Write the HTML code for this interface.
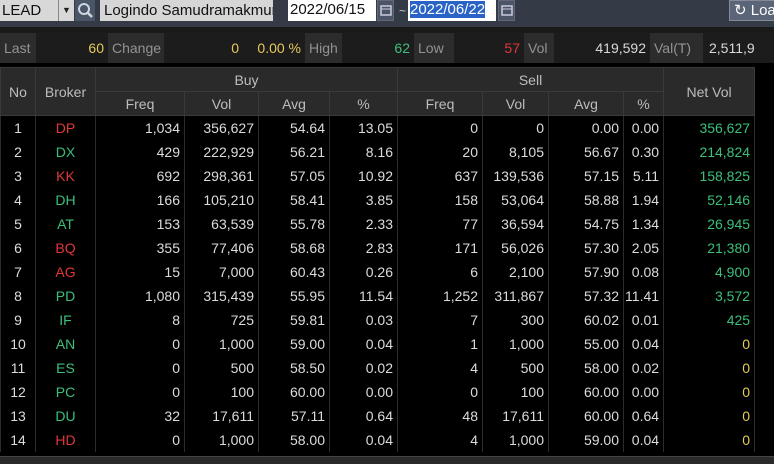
<!DOCTYPE html>
<html><head><meta charset="utf-8"><style>
*{margin:0;padding:0;box-sizing:border-box}
body{width:774px;height:464px;background:#000;overflow:hidden;font-family:"Liberation Sans",Arial,sans-serif;font-size:13px;color:#d8d8d8;position:relative}
.top{position:absolute;left:0;top:0;width:774px;height:27px;background:#353b46}
.ab{position:absolute}
.strip{position:absolute;left:0;top:27px;width:774px;height:6px;background:#1a1a1a}
.info{position:absolute;top:33px;height:30px;line-height:30px;font-size:14px;white-space:nowrap;overflow:hidden}
.lb{background:#2c2c2c;color:#939393;padding-left:4px}
.vl{background:#1c1c1c;text-align:right;padding-right:4px}
table{position:absolute;left:0;top:67px;border-collapse:collapse;table-layout:fixed;width:754px}
th{background:#2a2a2a;color:#bdbdbd;font-weight:normal;font-size:14px;border:1px solid #3a3a3a;height:24px}
td{height:24px;border-left:1px solid #2c2c2c;border-right:1px solid #2c2c2c;text-align:right;padding-right:4px;font-size:14px;color:#dcdcdc}
td.c{text-align:center;padding:0}
.g{color:#3dbf7c}.r{color:#e03838}.y{color:#e6c85a}
.bot{position:absolute;left:0;top:456px;width:774px;height:8px;background:#2a2a2a;border-top:1px solid #444}
</style></head><body>
<div class="top"></div>
<div class="ab" style="left:0;top:0;width:58px;height:21px;background:#d8d8d8;color:#111;font-size:15px;line-height:21px;padding-left:2px">LEAD</div>
<div class="ab" style="left:58px;top:0;width:16px;height:21px;background:#d8d8d8;border-left:1px solid #888;color:#222;font-size:9px;line-height:21px;text-align:center">▼</div>
<div class="ab" style="left:75px;top:0;width:20px;height:21px;background:#4a5568"><svg width="20" height="21"><circle cx="9" cy="9" r="5" fill="none" stroke="#cfd6e0" stroke-width="2"/><line x1="12.5" y1="12.5" x2="17" y2="17" stroke="#cfd6e0" stroke-width="2.5"/></svg></div>
<div class="ab" style="left:100px;top:0;width:173px;height:21px;background:#d6d6d6;color:#111;font-size:15px;line-height:21px;padding-left:4px;overflow:hidden;white-space:nowrap">Logindo Samudramakmur</div>
<div class="ab" style="left:288px;top:0;width:88px;height:21px;background:#fff;color:#111;font-size:15px;line-height:19px;padding-left:2px">2022/06/15</div>
<div class="ab" style="left:377px;top:0;width:17px;height:21px;background:#4a5568;border:1px solid #667"><svg width="15" height="19"><rect x="3" y="5" width="10" height="9" fill="none" stroke="#ccd" stroke-width="1.5"/><line x1="3" y1="8" x2="13" y2="8" stroke="#ccd"/></svg></div>
<div class="ab" style="left:399px;top:4px;color:#ccc;font-size:12px">~</div>
<div class="ab" style="left:408px;top:0;width:88px;height:21px;background:#fff;font-size:15px;line-height:19px;padding-left:2px"><span style="background:#2a63c8;color:#fff">2022/06/22</span></div>
<div class="ab" style="left:498px;top:0;width:17px;height:21px;background:#4a5568;border:1px solid #667"><svg width="15" height="19"><rect x="3" y="5" width="10" height="9" fill="none" stroke="#ccd" stroke-width="1.5"/><line x1="3" y1="8" x2="13" y2="8" stroke="#ccd"/></svg></div>
<div class="ab" style="left:729px;top:0;width:50px;height:21px;background:#5a6577;border:1px solid #889;color:#fff;font-size:15px;line-height:20px;padding-left:4px;white-space:nowrap;overflow:hidden">↻ Load</div>
<div class="strip"></div>
<div class="info lb" style="left:0;width:36px">Last</div>
<div class="info vl y" style="left:36px;width:72px">60</div>
<div class="info lb" style="left:108px;width:56px">Change</div>
<div class="info vl y" style="left:164px;width:79px">0</div>
<div class="info vl y" style="left:243px;width:62px">0.00 %</div>
<div class="info lb" style="left:305px;width:37px">High</div>
<div class="info vl g" style="left:342px;width:72px">62</div>
<div class="info lb" style="left:414px;width:40px">Low</div>
<div class="info vl r" style="left:454px;width:70px">57</div>
<div class="info lb" style="left:524px;width:30px">Vol</div>
<div class="info vl" style="left:554px;width:96px">419,592</div>
<div class="info lb" style="left:650px;width:53px">Val(T)</div>
<div class="info vl" style="left:703px;width:80px;text-align:left;padding-left:6px">2,511,9</div>
<table>
<colgroup><col style="width:35px"><col style="width:60px"><col style="width:89px"><col style="width:74px"><col style="width:71px"><col style="width:68px"><col style="width:85px"><col style="width:66px"><col style="width:75px"><col style="width:40px"><col style="width:91px"></colgroup>
<tr><th rowspan="2">No</th><th rowspan="2">Broker</th><th colspan="4">Buy</th><th colspan="4">Sell</th><th rowspan="2">Net Vol</th></tr>
<tr><th>Freq</th><th>Vol</th><th>Avg</th><th>%</th><th>Freq</th><th>Vol</th><th>Avg</th><th>%</th></tr>
<tr><td class="c">1</td><td class="c r">DP</td><td>1,034</td><td>356,627</td><td>54.64</td><td>13.05</td><td>0</td><td>0</td><td>0.00</td><td>0.00</td><td class="g">356,627</td></tr>
<tr><td class="c">2</td><td class="c g">DX</td><td>429</td><td>222,929</td><td>56.21</td><td>8.16</td><td>20</td><td>8,105</td><td>56.67</td><td>0.30</td><td class="g">214,824</td></tr>
<tr><td class="c">3</td><td class="c r">KK</td><td>692</td><td>298,361</td><td>57.05</td><td>10.92</td><td>637</td><td>139,536</td><td>57.15</td><td>5.11</td><td class="g">158,825</td></tr>
<tr><td class="c">4</td><td class="c g">DH</td><td>166</td><td>105,210</td><td>58.41</td><td>3.85</td><td>158</td><td>53,064</td><td>58.88</td><td>1.94</td><td class="g">52,146</td></tr>
<tr><td class="c">5</td><td class="c g">AT</td><td>153</td><td>63,539</td><td>55.78</td><td>2.33</td><td>77</td><td>36,594</td><td>54.75</td><td>1.34</td><td class="g">26,945</td></tr>
<tr><td class="c">6</td><td class="c r">BQ</td><td>355</td><td>77,406</td><td>58.68</td><td>2.83</td><td>171</td><td>56,026</td><td>57.30</td><td>2.05</td><td class="g">21,380</td></tr>
<tr><td class="c">7</td><td class="c r">AG</td><td>15</td><td>7,000</td><td>60.43</td><td>0.26</td><td>6</td><td>2,100</td><td>57.90</td><td>0.08</td><td class="g">4,900</td></tr>
<tr><td class="c">8</td><td class="c g">PD</td><td>1,080</td><td>315,439</td><td>55.95</td><td>11.54</td><td>1,252</td><td>311,867</td><td>57.32</td><td>11.41</td><td class="g">3,572</td></tr>
<tr><td class="c">9</td><td class="c g">IF</td><td>8</td><td>725</td><td>59.81</td><td>0.03</td><td>7</td><td>300</td><td>60.02</td><td>0.01</td><td class="g">425</td></tr>
<tr><td class="c">10</td><td class="c g">AN</td><td>0</td><td>1,000</td><td>59.00</td><td>0.04</td><td>1</td><td>1,000</td><td>55.00</td><td>0.04</td><td class="y">0</td></tr>
<tr><td class="c">11</td><td class="c g">ES</td><td>0</td><td>500</td><td>58.50</td><td>0.02</td><td>4</td><td>500</td><td>58.00</td><td>0.02</td><td class="y">0</td></tr>
<tr><td class="c">12</td><td class="c g">PC</td><td>0</td><td>100</td><td>60.00</td><td>0.00</td><td>0</td><td>100</td><td>60.00</td><td>0.00</td><td class="y">0</td></tr>
<tr><td class="c">13</td><td class="c g">DU</td><td>32</td><td>17,611</td><td>57.11</td><td>0.64</td><td>48</td><td>17,611</td><td>60.00</td><td>0.64</td><td class="y">0</td></tr>
<tr><td class="c">14</td><td class="c r">HD</td><td>0</td><td>1,000</td><td>58.00</td><td>0.04</td><td>4</td><td>1,000</td><td>59.00</td><td>0.04</td><td class="y">0</td></tr>
</table>
<div class="bot"></div>
</body></html>
